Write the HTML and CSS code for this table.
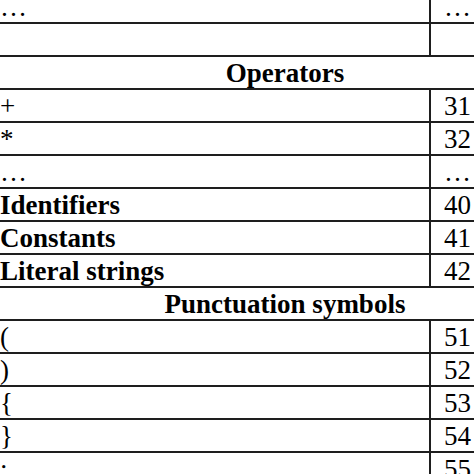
FILE: index.html
```html
<!DOCTYPE html>
<html>
<head>
<meta charset="utf-8">
<link rel="stylesheet" href="styles.css">
</head>
<body>
<table class="tokens">
  <tbody>
    <tr><td class="name">…</td><td class="code">…</td></tr>
    <tr><td class="name"></td><td class="code"></td></tr>
    <tr><td class="group" colspan="2">Operators</td></tr>
    <tr><td class="name">+</td><td class="code">31</td></tr>
    <tr><td class="name">*</td><td class="code">32</td></tr>
    <tr><td class="name">…</td><td class="code">…</td></tr>
    <tr><td class="name strong">Identifiers</td><td class="code">40</td></tr>
    <tr><td class="name strong">Constants</td><td class="code">41</td></tr>
    <tr><td class="name strong">Literal strings</td><td class="code">42</td></tr>
    <tr><td class="group" colspan="2">Punctuation symbols</td></tr>
    <tr><td class="name">(</td><td class="code">51</td></tr>
    <tr><td class="name">)</td><td class="code">52</td></tr>
    <tr><td class="name">{</td><td class="code">53</td></tr>
    <tr><td class="name">}</td><td class="code">54</td></tr>
    <tr><td class="name">;</td><td class="code">55</td></tr>
  </tbody>
</table>
</body>
</html>
```
FILE: styles.css
```css
html, body {
  margin: 0;
  padding: 0;
  overflow: hidden;
  background: #ffffff;
}

.tokens {
  margin-top: -9px;
  margin-left: -6px;
  width: 582px;
  border-collapse: separate;
  border-spacing: 0;
  table-layout: fixed;
  font-family: "Liberation Serif", "Times New Roman", serif;
  font-size: 27px;
  color: #000;
}

.tokens td {
  height: 30px;
  line-height: 30px;
  padding: 1px 0 0 0;
  border-bottom: 2px solid #1e1e1e;
  white-space: nowrap;
  vertical-align: top;
}

.tokens .name {
  width: 429px;
  padding-left: 6px;
  text-align: left;
}

.tokens .code {
  border-left: 2px solid #1e1e1e;
  padding-left: 13px;
  text-align: left;
}

.tokens .strong,
.tokens .group {
  font-weight: bold;
}

.tokens .group {
  text-align: center;
}
```
